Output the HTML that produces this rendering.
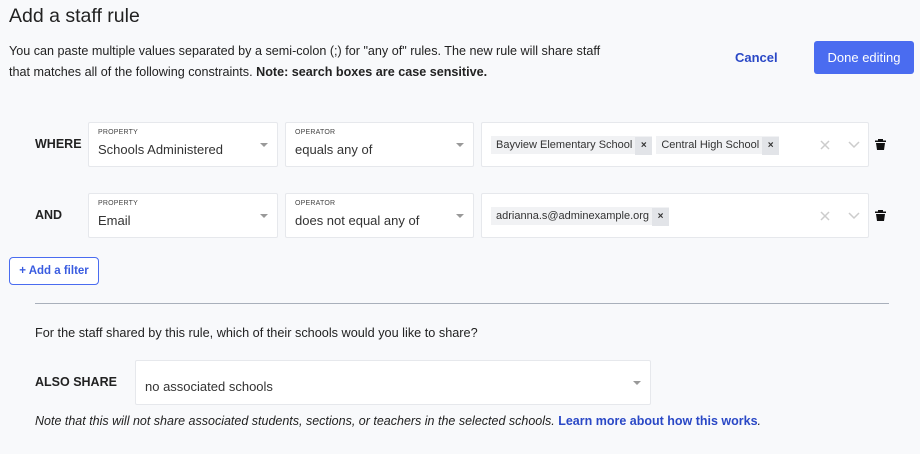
<!DOCTYPE html>
<html><head><meta charset="utf-8"><style>
*{box-sizing:border-box;margin:0;padding:0}
body{width:920px;height:454px;background:#f8f9fb;font-family:"Liberation Sans",sans-serif;color:#222;position:relative;overflow:hidden}
.a{position:absolute;white-space:nowrap}
.box{position:absolute;background:#fff;border:1px solid #e6e8ec;border-radius:2px}
.lbl{position:absolute;left:9px;top:6px;font-size:7px;color:#444;letter-spacing:.2px}
.val{position:absolute;left:9px;top:19px;font-size:13px;color:#333}
.car{position:absolute;right:9px;top:20px;width:0;height:0;border-left:4px solid transparent;border-right:4px solid transparent;border-top:4px solid #999}
.tag{display:inline-block;background:#f1f2f4;font-size:11px;color:#333;height:18px;line-height:18px;padding-left:5px;margin-right:4px}
.tag b{display:inline-block;background:#e2e4e8;width:17px;text-align:center;margin-left:3px;font-size:10px}
.rl{position:absolute;font-size:12.5px;font-weight:bold;color:#222}
</style></head><body>
<div class="a" style="left:9px;top:5px;font-size:19.5px;color:#222">Add a staff rule</div>
<div class="a" style="left:9px;top:41px;font-size:12.6px;line-height:21px;color:#222">You can paste multiple values separated by a semi-colon (;) for "any of" rules. The new rule will share staff<br>that matches all of the following constraints. <b>Note: search boxes are case sensitive.</b></div>
<div class="a" style="left:735px;top:50px;font-size:13px;font-weight:bold;color:#2a48c6">Cancel</div>
<div class="a" style="left:814px;top:41px;width:100px;height:33px;background:#4a6cf0;border-radius:3px;color:#fff;font-size:13px;text-align:center;line-height:33px">Done editing</div>

<div class="rl" style="left:35px;top:137px">WHERE</div>
<div class="box" style="left:88px;top:122px;width:190px;height:45px"><div class="lbl">PROPERTY</div><div class="val">Schools Administered</div><div class="car"></div></div>
<div class="box" style="left:285px;top:122px;width:189px;height:45px"><div class="lbl">OPERATOR</div><div class="val">equals any of</div><div class="car"></div></div>
<div class="box" style="left:481px;top:122px;width:388px;height:45px"><div style="position:absolute;left:9px;top:12px"><span class="tag">Bayview Elementary School<b>×</b></span><span class="tag">Central High School<b>×</b></span></div>
<svg class="a" style="left:338px;top:17px" width="10" height="10"><path d="M1 1L9 9M9 1L1 9" stroke="#ccc" stroke-width="1.5"/></svg>
<svg class="a" style="left:366px;top:18px" width="12" height="8"><path d="M1 1L6 6L11 1" stroke="#ccc" stroke-width="1.5" fill="none"/></svg></div>
<svg class="a" style="left:875px;top:138px" width="11" height="12"><path d="M3 1h5v1.5h3V4H0V2.5h3z M1 5h9l-1 7H2z" fill="#111"/></svg>

<div class="rl" style="left:35px;top:208px">AND</div>
<div class="box" style="left:88px;top:193px;width:190px;height:45px"><div class="lbl">PROPERTY</div><div class="val">Email</div><div class="car"></div></div>
<div class="box" style="left:285px;top:193px;width:189px;height:45px"><div class="lbl">OPERATOR</div><div class="val">does not equal any of</div><div class="car"></div></div>
<div class="box" style="left:481px;top:193px;width:388px;height:45px"><div style="position:absolute;left:9px;top:12px"><span class="tag">adrianna.s@adminexample.org<b>×</b></span></div>
<svg class="a" style="left:338px;top:17px" width="10" height="10"><path d="M1 1L9 9M9 1L1 9" stroke="#ccc" stroke-width="1.5"/></svg>
<svg class="a" style="left:366px;top:18px" width="12" height="8"><path d="M1 1L6 6L11 1" stroke="#ccc" stroke-width="1.5" fill="none"/></svg></div>
<svg class="a" style="left:875px;top:209px" width="11" height="12"><path d="M3 1h5v1.5h3V4H0V2.5h3z M1 5h9l-1 7H2z" fill="#111"/></svg>

<div class="a" style="left:9px;top:257px;width:90px;height:28px;border:1px solid #4a6cf0;border-radius:4px;background:#fff;color:#3a5ce0;font-size:11.5px;font-weight:bold;text-align:center;line-height:26px">+ Add a filter</div>
<div class="a" style="left:35px;top:303px;width:854px;height:1px;background:#a9b0bb"></div>
<div class="a" style="left:35px;top:326px;font-size:12.7px;color:#222">For the staff shared by this rule, which of their schools would you like to share?</div>
<div class="rl" style="left:35px;top:375px">ALSO SHARE</div>
<div class="box" style="left:135px;top:360px;width:516px;height:45px"><div class="val" style="top:18px">no associated schools</div><div class="car" style="top:20px"></div></div>
<div class="a" style="left:35px;top:414px;font-size:12.5px;font-style:italic;color:#222">Note that this will not share associated students, sections, or teachers in the selected schools. <span style="font-style:normal;font-weight:bold;color:#2a48c6">Learn more about how this works</span>.</div>
</body></html>
